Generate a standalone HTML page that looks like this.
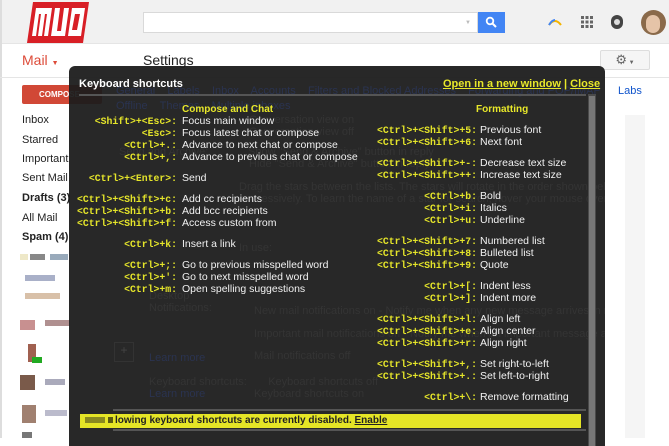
<!DOCTYPE html>
<html><head><meta charset="utf-8"><style>
*{margin:0;padding:0;box-sizing:border-box}
body{width:669px;height:438px;overflow:hidden;background:#fff;font-family:"Liberation Sans",Arial,sans-serif;position:relative}
.a{position:absolute;white-space:nowrap}
.top{position:absolute;left:0;top:0;width:669px;height:44px;background:#f1f1f1;border-bottom:1px solid #e5e5e5}
.nav{font-size:11px;color:#222;left:22px}
.ov{position:absolute;left:69px;top:66px;width:536px;height:380px;background:rgba(28,28,28,0.95);border-radius:6px 6px 0 0;overflow:hidden}
.bg{color:#343434;font-size:11px}
.bgb{color:#2a3350;font-size:11px}
.k{font-family:"Liberation Mono",monospace;font-weight:bold;color:#e5e52a;font-size:9.8px;text-align:right;position:absolute;white-space:nowrap}
.d{color:#f2f2f2;font-size:10.5px;position:absolute;white-space:nowrap}
.h{color:#e8e82a;font-weight:bold;font-size:10px;position:absolute}
.px{position:absolute;width:8px;height:6px}
</style></head><body>
<div class="top"></div>
<div class="a" style="left:0;top:0;width:2px;height:438px;background:#ddd"></div>
<svg class="a" style="left:27px;top:2px" width="62" height="41" viewBox="0 0 62 41">
<polygon points="6,0 62,0 56,41 0,41" fill="#d81f26"/>
<g fill="#fff">
<polygon points="9,6 25,6 21,34 17,34 20,12 18,12 15,34 11,34 14,12 12,12 9,34 5,34"/>
<polygon points="28,6 33,6 30,29 34,29 37,6 42,6 38,34 24,34"/>
<polygon points="45,6 58,6 54,34 41,34"/>
</g>
<polygon points="48,12 53,12 50,28 45,28" fill="#d81f26"/>
</svg>
<div class="a" style="left:143px;top:12px;width:335px;height:21px;background:#fff;border:1px solid #d9d9d9"></div>
<div class="a" style="left:465px;top:20px;font-size:6px;color:#bbb">▼</div>
<div class="a" style="left:478px;top:12px;width:27px;height:21px;background:#4285f4"></div>
<svg class="a" style="left:485px;top:16px" width="13" height="13"><circle cx="5" cy="5" r="3.3" stroke="#fff" stroke-width="1.8" fill="none"/><line x1="7.5" y1="7.5" x2="11" y2="11" stroke="#fff" stroke-width="2"/></svg>
<svg class="a" style="left:548px;top:18px" width="14" height="8"><path d="M1 7 Q7 -1 13 7" stroke="#f4b400" stroke-width="2" fill="none"/><path d="M1 7 Q4 2 7 2" stroke="#4285f4" stroke-width="2" fill="none"/></svg>
<svg class="a" style="left:581px;top:16px" width="12" height="12" fill="#666"><rect x="0" y="0" width="3" height="3"/><rect x="4.5" y="0" width="3" height="3"/><rect x="9" y="0" width="3" height="3"/><rect x="0" y="4.5" width="3" height="3"/><rect x="4.5" y="4.5" width="3" height="3"/><rect x="9" y="4.5" width="3" height="3"/><rect x="0" y="9" width="3" height="3"/><rect x="4.5" y="9" width="3" height="3"/><rect x="9" y="9" width="3" height="3"/></svg>
<div class="a" style="left:611px;top:15px;width:12px;height:14px;border-radius:6px;background:#444"></div>
<div class="a" style="left:614px;top:19px;width:6px;height:6px;border-radius:3px;background:#ddd"></div>
<div class="a" style="left:641px;top:10px;width:25px;height:25px;border-radius:13px;background:#8a6a4a"></div>
<div class="a" style="left:646px;top:15px;width:14px;height:18px;border-radius:7px;background:#e5c4a8"></div>
<div class="a" style="left:22px;top:52px;font-size:14px;color:#dd4b39">Mail <span style="font-size:7px">▼</span></div>
<div class="a" style="left:143px;top:52px;font-size:14px;color:#222">Settings</div>
<div class="a" style="left:600px;top:50px;width:50px;height:20px;background:#f5f5f5;border:1px solid #ddd;border-radius:2px;color:#666;font-size:13px;text-align:center;line-height:18px">⚙<span style="font-size:6px"> ▼</span></div>
<div class="a" style="left:0;top:77px;width:669px;height:1px;background:#e5e5e5"></div>
<div class="a" style="left:618px;top:85px;font-size:11px;color:#15c">Labs</div>
<div class="a" style="left:22px;top:85px;width:80px;height:19px;background:#d14836;border-radius:2px;color:#fff;font-size:8px;font-weight:bold;line-height:19px;padding-left:17px">COMPOSE</div>
<div class="a nav" style="top:114px">Inbox</div>
<div class="a nav" style="top:134px">Starred</div>
<div class="a nav" style="top:153px">Important</div>
<div class="a nav" style="top:172px">Sent Mail</div>
<div class="a nav" style="top:192px;font-weight:bold">Drafts (3)</div>
<div class="a nav" style="top:212px">All Mail</div>
<div class="a nav" style="top:231px;font-weight:bold">Spam (4)</div>
<div class="px" style="left:20px;top:254px;background:#eee8c8"></div><div class="px" style="left:30px;top:254px;background:#888;width:15px"></div><div class="px" style="left:50px;top:254px;background:#9ab;width:18px"></div>
<div class="px" style="left:25px;top:275px;background:#a9b0c8;width:30px"></div>
<div class="px" style="left:25px;top:293px;background:#d8c0a8;width:35px"></div>
<div class="px" style="left:20px;top:320px;background:#c89090;width:15px;height:10px"></div><div class="px" style="left:45px;top:320px;background:#b09090;width:25px"></div>
<div class="px" style="left:28px;top:344px;background:#a06050;height:18px"></div><div class="px" style="left:32px;top:357px;background:#2a2;width:10px"></div>
<div class="px" style="left:20px;top:375px;background:#7a5a4a;width:15px;height:15px"></div><div class="px" style="left:45px;top:379px;background:#aab;width:20px"></div>
<div class="px" style="left:22px;top:405px;background:#a08070;width:14px;height:18px"></div><div class="px" style="left:45px;top:410px;background:#bbc;width:22px"></div>
<div class="px" style="left:22px;top:432px;background:#777;width:10px"></div>
<div class="a" style="left:625px;top:115px;width:20px;height:323px;background:#f5f5f5"></div>

<div class="ov">
 <div class="a bgb" style="left:47px;top:19px">General &nbsp;&nbsp; Labels &nbsp;&nbsp; Inbox &nbsp;&nbsp; Accounts &nbsp;&nbsp; Filters and Blocked Addresses &nbsp;&nbsp; Forwarding and POP/IMAP &nbsp;&nbsp; Chat</div>
 <div class="a bgb" style="left:47px;top:34px">Offline &nbsp;&nbsp; Themes &nbsp;&nbsp; Multiple inboxes</div>
 <div class="a bg" style="left:180px;top:48px">Conversation view on</div>
 <div class="a bg" style="left:180px;top:60px">Conversation view off</div>
 <div class="a bg" style="left:50px;top:80px">Send and Archive: &nbsp;&nbsp;&nbsp;&nbsp;&nbsp;&nbsp;&nbsp;&nbsp;&nbsp;&nbsp;&nbsp; Show "Send &amp; Archive" button in reply</div>
 <div class="a bg" style="left:180px;top:92px">Hide "Send &amp; Archive" button in reply</div>
 <div class="a bg" style="left:170px;top:115px">Drag the stars between the lists. The stars will rotate in the order shown below when you click</div>
 <div class="a bg" style="left:170px;top:127px">successively. To learn the name of a star for search, hover your mouse over the image.</div>
 <div class="a bg" style="left:170px;top:176px">In use:</div>
 <div class="a bg" style="left:80px;top:224px">Desktop</div>
 <div class="a bg" style="left:80px;top:236px">Notifications:</div>
 <div class="a bg" style="left:185px;top:239px">New mail notifications on - Notify me when any new message arrives in my inbox or primary</div>
 <div class="a bg" style="left:185px;top:262px">Important mail notifications on - Notify me when an important message arrives in my</div>
 <div class="a bg" style="left:185px;top:284px">Mail notifications off</div>
 <div class="a bgb" style="left:80px;top:286px">Learn more</div>
 <div class="a bg" style="left:80px;top:310px">Keyboard shortcuts: &nbsp;&nbsp;&nbsp;&nbsp;&nbsp; Keyboard shortcuts off</div>
 <div class="a bg" style="left:185px;top:322px">Keyboard shortcuts on</div>
 <div class="a bgb" style="left:80px;top:322px">Learn more</div>
 <div class="a" style="left:45px;top:276px;width:20px;height:20px;border:1px solid #333;color:#444;font-size:12px;text-align:center">+</div>
 <div class="a" style="left:10px;top:12px;color:#fff;font-weight:bold;font-size:11px">Keyboard shortcuts</div>
 <div class="a" style="left:374px;top:12px;color:#e8e82a;font-weight:bold;font-size:11px"><u>Open in a new window</u> | <u>Close</u></div>
 <div class="a" style="left:10px;top:28px;width:507px;height:2px;background:#555"></div>
 <div class="a" style="left:519px;top:28px;width:8px;height:352px;background:#4a4a4a"></div>
 <div class="a" style="left:520px;top:30px;width:6px;height:350px;background:#777"></div>
 <div class="h" style="left:113px;top:38px">Compose and Chat</div>
 <div class="h" style="left:407px;top:38px">Formatting</div>
 <div class="a" style="left:44px;top:343px;width:473px;height:2px;background:#555"></div>
 <div class="a" style="left:11px;top:348px;width:501px;height:14px;background:#e5e526"></div>
 <div class="a" style="left:16px;top:351px;width:20px;height:6px;background:#8a8a20"></div>
 <div class="a" style="left:39px;top:351px;width:5px;height:6px;background:#5a5a10"></div>
 <div class="a" style="left:46px;top:349px;font-size:10px;color:#222;font-weight:bold">lowing keyboard shortcuts are currently disabled. <u>Enable</u></div>
 <div class="a" style="left:44px;top:363px;width:473px;height:2px;background:#555"></div>
</div>
<div style="position:absolute;left:69px;top:66px">
<div class="k" style="right:-108px;top:50px">&lt;Shift&gt;+&lt;Esc&gt;:</div><div class="d" style="left:113px;top:49px">Focus main window</div>
<div class="k" style="right:-108px;top:62px">&lt;Esc&gt;:</div><div class="d" style="left:113px;top:61px">Focus latest chat or compose</div>
<div class="k" style="right:-108px;top:74px">&lt;Ctrl&gt;+.:</div><div class="d" style="left:113px;top:73px">Advance to next chat or compose</div>
<div class="k" style="right:-108px;top:86px">&lt;Ctrl&gt;+,:</div><div class="d" style="left:113px;top:85px">Advance to previous chat or compose</div>
<div class="k" style="right:-108px;top:107px">&lt;Ctrl&gt;+&lt;Enter&gt;:</div><div class="d" style="left:113px;top:106px">Send</div>
<div class="k" style="right:-108px;top:128px">&lt;Ctrl&gt;+&lt;Shift&gt;+c:</div><div class="d" style="left:113px;top:127px">Add cc recipients</div>
<div class="k" style="right:-108px;top:140px">&lt;Ctrl&gt;+&lt;Shift&gt;+b:</div><div class="d" style="left:113px;top:139px">Add bcc recipients</div>
<div class="k" style="right:-108px;top:152px">&lt;Ctrl&gt;+&lt;Shift&gt;+f:</div><div class="d" style="left:113px;top:151px">Access custom from</div>
<div class="k" style="right:-108px;top:173px">&lt;Ctrl&gt;+k:</div><div class="d" style="left:113px;top:172px">Insert a link</div>
<div class="k" style="right:-108px;top:194px">&lt;Ctrl&gt;+;:</div><div class="d" style="left:113px;top:193px">Go to previous misspelled word</div>
<div class="k" style="right:-108px;top:206px">&lt;Ctrl&gt;+':</div><div class="d" style="left:113px;top:205px">Go to next misspelled word</div>
<div class="k" style="right:-108px;top:218px">&lt;Ctrl&gt;+m:</div><div class="d" style="left:113px;top:217px">Open spelling suggestions</div>

<div class="k" style="right:-408px;top:59px">&lt;Ctrl&gt;+&lt;Shift&gt;+5:</div><div class="d" style="left:411px;top:58px">Previous font</div>
<div class="k" style="right:-408px;top:71px">&lt;Ctrl&gt;+&lt;Shift&gt;+6:</div><div class="d" style="left:411px;top:70px">Next font</div>
<div class="k" style="right:-408px;top:92px">&lt;Ctrl&gt;+&lt;Shift&gt;+-:</div><div class="d" style="left:411px;top:91px">Decrease text size</div>
<div class="k" style="right:-408px;top:104px">&lt;Ctrl&gt;+&lt;Shift&gt;++:</div><div class="d" style="left:411px;top:103px">Increase text size</div>
<div class="k" style="right:-408px;top:125px">&lt;Ctrl&gt;+b:</div><div class="d" style="left:411px;top:124px">Bold</div>
<div class="k" style="right:-408px;top:137px">&lt;Ctrl&gt;+i:</div><div class="d" style="left:411px;top:136px">Italics</div>
<div class="k" style="right:-408px;top:149px">&lt;Ctrl&gt;+u:</div><div class="d" style="left:411px;top:148px">Underline</div>
<div class="k" style="right:-408px;top:170px">&lt;Ctrl&gt;+&lt;Shift&gt;+7:</div><div class="d" style="left:411px;top:169px">Numbered list</div>
<div class="k" style="right:-408px;top:182px">&lt;Ctrl&gt;+&lt;Shift&gt;+8:</div><div class="d" style="left:411px;top:181px">Bulleted list</div>
<div class="k" style="right:-408px;top:194px">&lt;Ctrl&gt;+&lt;Shift&gt;+9:</div><div class="d" style="left:411px;top:193px">Quote</div>
<div class="k" style="right:-408px;top:215px">&lt;Ctrl&gt;+[:</div><div class="d" style="left:411px;top:214px">Indent less</div>
<div class="k" style="right:-408px;top:227px">&lt;Ctrl&gt;+]:</div><div class="d" style="left:411px;top:226px">Indent more</div>
<div class="k" style="right:-408px;top:248px">&lt;Ctrl&gt;+&lt;Shift&gt;+l:</div><div class="d" style="left:411px;top:247px">Align left</div>
<div class="k" style="right:-408px;top:260px">&lt;Ctrl&gt;+&lt;Shift&gt;+e:</div><div class="d" style="left:411px;top:259px">Align center</div>
<div class="k" style="right:-408px;top:272px">&lt;Ctrl&gt;+&lt;Shift&gt;+r:</div><div class="d" style="left:411px;top:271px">Align right</div>
<div class="k" style="right:-408px;top:293px">&lt;Ctrl&gt;+&lt;Shift&gt;+,:</div><div class="d" style="left:411px;top:292px">Set right-to-left</div>
<div class="k" style="right:-408px;top:305px">&lt;Ctrl&gt;+&lt;Shift&gt;+.:</div><div class="d" style="left:411px;top:304px">Set left-to-right</div>
<div class="k" style="right:-408px;top:326px">&lt;Ctrl&gt;+\:</div><div class="d" style="left:411px;top:325px">Remove formatting</div>
</div>
</body></html>
